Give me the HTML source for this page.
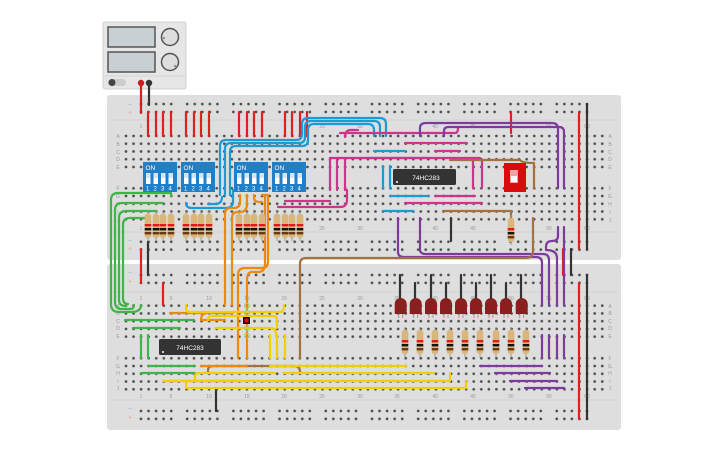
<!DOCTYPE html>
<html><head><meta charset="utf-8"><style>
html,body{margin:0;padding:0;background:#fff;width:725px;height:453px;overflow:hidden}
svg{display:block}
text{font-family:"Liberation Sans",sans-serif}
</style></head><body>
<svg width="725" height="453" viewBox="0 0 725 453" xmlns="http://www.w3.org/2000/svg">
<defs>
<pattern id="h" patternUnits="userSpaceOnUse" width="7.56" height="7.75"><circle cx="3.78" cy="3.875" r="1.35" fill="#4d4d4d"/></pattern>
<pattern id="r" patternUnits="userSpaceOnUse" width="46.2" height="7.9"><circle cx="3.78" cy="3.95" r="1.35" fill="#4d4d4d"/><circle cx="11.34" cy="3.95" r="1.35" fill="#4d4d4d"/><circle cx="18.9" cy="3.95" r="1.35" fill="#4d4d4d"/><circle cx="26.46" cy="3.95" r="1.35" fill="#4d4d4d"/><circle cx="34.02" cy="3.95" r="1.35" fill="#4d4d4d"/></pattern>
<g id="res"><rect x="-3.3" y="0" width="6.6" height="24" rx="2.5" fill="#d9b67c"/><rect x="-3.3" y="10" width="6.6" height="2.4" fill="#e01b1b"/><rect x="-3.3" y="14" width="6.6" height="2.4" fill="#111"/><rect x="-3.3" y="18" width="6.6" height="2.4" fill="#6b3a10"/><line x1="0" y1="-3" x2="0" y2="0" stroke="#999" stroke-width="1"/><line x1="0" y1="24" x2="0" y2="27" stroke="#999" stroke-width="1"/></g>
<g id="dip"><rect x="0" y="0" width="34" height="30" fill="#1f7fc9"/><text x="2.5" y="8" font-size="6.5" fill="#fff">ON</text>
<rect x="3" y="11" width="4.5" height="11" fill="#fff" opacity=".8"/><rect x="3" y="16" width="4.5" height="6" fill="#fff"/>
<rect x="10.5" y="11" width="4.5" height="11" fill="#fff" opacity=".8"/><rect x="10.5" y="16" width="4.5" height="6" fill="#fff"/>
<rect x="18" y="11" width="4.5" height="11" fill="#fff" opacity=".8"/><rect x="18" y="16" width="4.5" height="6" fill="#fff"/>
<rect x="25.5" y="11" width="4.5" height="11" fill="#fff" opacity=".8"/><rect x="25.5" y="16" width="4.5" height="6" fill="#fff"/>
<text x="3" y="28.5" font-size="6" fill="#fff">1</text><text x="10.5" y="28.5" font-size="6" fill="#fff">2</text><text x="18" y="28.5" font-size="6" fill="#fff">3</text><text x="25.5" y="28.5" font-size="6" fill="#fff">4</text></g>
<g id="led"><line x1="-2" y1="14" x2="-2" y2="20" stroke="#999" stroke-width="1"/><line x1="2" y1="14" x2="2" y2="20" stroke="#999" stroke-width="1"/><path d="M-6,16 V6 A6,6 0 0 1 6,6 V16 Z" fill="#8a1f1f"/></g>
</defs>

<rect x="103" y="22" width="83" height="67" rx="2" fill="#e6e6e6" stroke="#d0d0d0"/>
<rect x="108" y="27" width="47" height="20" fill="#c8d0d3" stroke="#555" stroke-width="1.5"/>
<rect x="108" y="52" width="47" height="20" fill="#c8d0d3" stroke="#555" stroke-width="1.5"/>
<circle cx="170" cy="37" r="8.5" fill="#ddd" stroke="#555" stroke-width="1.5"/>
<circle cx="170" cy="62" r="8.5" fill="#ddd" stroke="#555" stroke-width="1.5"/>
<circle cx="164" cy="38" r="0.8" fill="#333"/><circle cx="175" cy="66" r="0.8" fill="#333"/>
<line x1="103" y1="76" x2="186" y2="76" stroke="#d4d4d4"/>
<rect x="108" y="79" width="18" height="7" rx="3.5" fill="#ccc"/><circle cx="112" cy="82.5" r="3.5" fill="#444"/>
<rect x="107" y="95" width="514" height="165" rx="3" fill="#dedede"/>
<rect x="107" y="264" width="514" height="166" rx="3" fill="#dedede"/>
<g stroke="#d2d2d2" stroke-width="1">
<line x1="110" y1="120" x2="618" y2="120"/><line x1="110" y1="232" x2="618" y2="232"/>
<line x1="110" y1="292" x2="618" y2="292"/><line x1="110" y1="400" x2="618" y2="400"/>
</g>
<rect width="484" height="38.75" fill="url(#h)" transform="translate(122.2,132.1)"/>
<rect width="484" height="38.75" fill="url(#h)" transform="translate(122.2,184.4)"/>
<rect width="484" height="38.75" fill="url(#h)" transform="translate(122.2,301.8)"/>
<rect width="484" height="38.75" fill="url(#h)" transform="translate(122.2,354.4)"/>
<rect width="455" height="15.8" fill="url(#r)" transform="translate(137.2,100.1)"/>
<rect width="455" height="15.8" fill="url(#r)" transform="translate(137.2,237.8)"/>
<rect width="455" height="15.8" fill="url(#r)" transform="translate(137.2,271)"/>
<rect width="455" height="15.8" fill="url(#r)" transform="translate(137.2,407)"/>
<g font-size="5" fill="#9a9a9a" text-anchor="middle">
<text x="118" y="138">A</text><text x="118" y="146">B</text><text x="118" y="154">C</text><text x="118" y="161">D</text><text x="118" y="169">E</text>
<text x="118" y="190">F</text><text x="118" y="198">G</text><text x="118" y="206">H</text><text x="118" y="214">I</text><text x="118" y="222">J</text>
<text x="610" y="138">A</text><text x="610" y="146">B</text><text x="610" y="154">C</text><text x="610" y="161">D</text><text x="610" y="169">E</text>
<text x="610" y="190">F</text><text x="610" y="198">G</text><text x="610" y="206">H</text><text x="610" y="214">I</text><text x="610" y="222">J</text>
<text x="118" y="308">A</text><text x="118" y="315">B</text><text x="118" y="323">C</text><text x="118" y="330">D</text><text x="118" y="338">E</text>
<text x="118" y="360">F</text><text x="118" y="368">G</text><text x="118" y="375">H</text><text x="118" y="383">I</text><text x="118" y="390">J</text>
<text x="610" y="308">A</text><text x="610" y="315">B</text><text x="610" y="323">C</text><text x="610" y="330">D</text><text x="610" y="338">E</text>
<text x="610" y="360">F</text><text x="610" y="368">G</text><text x="610" y="375">H</text><text x="610" y="383">I</text><text x="610" y="390">J</text>
<text x="141" y="128">1</text><text x="322" y="128">25</text><text x="360" y="128">30</text><text x="435" y="128">40</text><text x="473" y="128">45</text><text x="549" y="128">55</text><text x="587" y="128">60</text>
<text x="141" y="230">1</text><text x="322" y="230">25</text><text x="360" y="230">30</text><text x="435" y="230">40</text><text x="473" y="230">45</text><text x="549" y="230">55</text><text x="587" y="230">60</text>
<text x="141" y="300">1</text><text x="171" y="300">5</text><text x="209" y="300">10</text><text x="247" y="300">15</text><text x="284" y="300">20</text><text x="322" y="300">25</text><text x="360" y="300">30</text><text x="397" y="300">35</text><text x="435" y="300">40</text><text x="473" y="300">45</text><text x="511" y="300">50</text><text x="549" y="300">55</text><text x="587" y="300">60</text>
<text x="141" y="398">1</text><text x="171" y="398">5</text><text x="209" y="398">10</text><text x="247" y="398">15</text><text x="284" y="398">20</text><text x="322" y="398">25</text><text x="360" y="398">30</text><text x="397" y="398">35</text><text x="435" y="398">40</text><text x="473" y="398">45</text><text x="511" y="398">50</text><text x="549" y="398">55</text><text x="587" y="398">60</text>
</g>
<g font-size="7" fill="#8db8e0"><text x="128" y="107">−</text><text x="128" y="275">−</text><text x="128" y="411">−</text><text x="128" y="243">−</text></g>
<g font-size="7" fill="#f0a0a0"><text x="128" y="115">+</text><text x="128" y="284">+</text><text x="128" y="420">+</text><text x="128" y="251">+</text></g>

<g fill="none" stroke-linecap="round" stroke-linejoin="round" stroke-width="2.2">
<path d="M141,84 V113" stroke="#d42020"/><path d="M149,84 V105" stroke="#333"/>
<g stroke="#e02020">
<path d="M148,112V136M156,112V136M163,112V136M171,112V136"/>
<path d="M186,112V136M194,112V136M201,112V136M209,112V136"/>
<path d="M239,112V136M247,112V136M254,112V136M262,112V136"/>
<path d="M285,112V136M292,112V136M300,112V136M307,112V136"/>
<path d="M511,113V133"/><path d="M579,113V249"/><path d="M563,249V275"/><path d="M579,283V419"/>
<path d="M141,249V283"/><path d="M163,283V305"/>
</g>
<g stroke="#333">
<path d="M587,104V249"/><path d="M571,249V275"/><path d="M587,275V419"/><path d="M148,242V275"/><path d="M216,388V411"/><path d="M451,218V241"/>
<path d="M400,275V300M415,283V300M431,275V300M446,283V300M461,275V300M476,283V300M491,275V300M506,283V300M521,275V300"/>
</g>
<g stroke="#1c9ad6">
<path d="M220,195V146Q220,140 226,140H296Q302,140 302,134V124Q302,118 308,118H380Q386,118 386,124V136"/>
<path d="M225,195V149Q225,143 231,143H299Q305,143 305,137V127Q305,121 311,121H374Q380,121 380,127V136"/>
<path d="M230,195V152Q230,146 236,146H302Q308,146 308,140V130Q308,124 314,124H368Q374,124 374,130V136"/>
<path d="M208,204H215Q222,204 222,197"/>
<path d="M186,203Q186,208 192,208H226Q233,208 233,201V190"/>
<path d="M374,151H405M367,158H428M383,166V188M390,166V188M390,196H428M383,211H413"/>
</g>
<g stroke="#d0338b">
<path d="M340,133H455Q458,133 458,128"/><path d="M405,143H467M435,151H460M330,158H480"/>
<path d="M473,160V188M482,160V188M435,196H475M405,203H482"/>
<path d="M330,158V190M337,158V190M345,158V190"/>
<path d="M278,207H340Q347,207 347,200V190M285,201H330"/>
<path d="M345,137Q345,130 351,130H358"/>
</g>
<g stroke="#7b3c9c">
<path d="M420,136V128Q420,123 426,123H552Q558,123 558,129V188"/>
<path d="M444,136V131Q444,127 449,127H559Q564,127 564,132V188"/>
<path d="M398,218V252Q398,257 404,257H536Q542,257 542,263V305"/>
<path d="M420,218V250Q420,254 426,254H543Q549,254 549,260V305"/>
<path d="M558,227V236Q558,241 552,241Q546,241 546,247V250Q557,250 557,258V305"/>
<path d="M564,227V305"/>
<path d="M542,335V358M549,335V358M557,335V358M564,335V358"/>
<path d="M480,366H542M495,373H550M510,381H557M525,388H564"/>
</g>
<g stroke="#a2713f">
<path d="M450,160H520Q522,163 534,163V188"/>
<path d="M443,211H511V220"/>
<path d="M300,358V264Q300,258 306,258H526Q533,258 533,251V218"/>
<path d="M208,373V370Q208,366 214,366H294Q300,366 300,372"/>
</g>
<g stroke="#3db548">
<path d="M171,196V193H118Q111,193 111,200V304Q111,312 119,312H131Q141,312 141,305"/>
<path d="M163,203H122Q115,203 115,210V302Q115,309 122,309H130Q134,309 134,305"/>
<path d="M156,211H126Q119,211 119,218V300Q119,306 126,306"/>
<path d="M148,218H130Q123,218 123,225V298Q123,304 128,304"/>
<path d="M125,320H194M133,328H180M141,335V358M148,335V358M148,366H195M141,373H195"/>
</g>
<g stroke="#ec8a10">
<path d="M240,195V202Q240,208 234,208H231Q225,208 225,214V305"/>
<path d="M247,195V204Q247,212 240,212H238Q232,212 232,218V305"/>
<path d="M254,195V198Q254,202 260,202H262M262,195H268V262Q268,268 262,268H245Q238,268 238,275V358"/>
<path d="M265,195V264Q265,272 258,272H252Q247,272 247,280V358"/>
<path d="M170,313H232M201,320Q201,313 208,313M201,320H225M201,366H247M170,381H240"/>
</g>
<g stroke="#f2d000">
<path d="M186,305V309Q186,312 190,312H280Q284,312 284,305"/>
<path d="M208,320Q208,316 212,316H274Q277,316 277,320V328"/>
<path d="M215,328H270Q276,328 276,335"/>
<path d="M270,335V358M277,335V358M285,335V358"/>
<path d="M270,366H406M283,373H434M195,381V376Q195,373 200,373H275"/>
<path d="M163,381H450Q450,376 450,373"/><path d="M186,388V384Q186,381 190,381"/>
<path d="M186,388H466Q466,384 466,381"/>
</g>
</g>
<circle cx="141" cy="83" r="3.2" fill="#c62020"/><circle cx="149" cy="83" r="3.2" fill="#333"/>
<use href="#dip" x="143" y="162"/><use href="#dip" x="181" y="162"/><use href="#dip" x="234" y="162"/><use href="#dip" x="272" y="162"/>
<g>
<use href="#res" x="148" y="214"/><use href="#res" x="156" y="214"/><use href="#res" x="163" y="214"/><use href="#res" x="171" y="214"/>
<use href="#res" x="186" y="214"/><use href="#res" x="194" y="214"/><use href="#res" x="201" y="214"/><use href="#res" x="209" y="214"/>
<use href="#res" x="239" y="214"/><use href="#res" x="247" y="214"/><use href="#res" x="254" y="214"/><use href="#res" x="262" y="214"/>
<use href="#res" x="277" y="214"/><use href="#res" x="285" y="214"/><use href="#res" x="292" y="214"/><use href="#res" x="300" y="214"/>
<use href="#res" x="511" y="218"/>
</g>
<g>
<rect x="393" y="169" width="63" height="16" rx="1.5" fill="#333"/>
<text x="426" y="180" font-size="6.5" fill="#fff" text-anchor="middle" font-family="Liberation Mono,monospace">74HC283</text>
<circle cx="397" cy="182" r="1" fill="#fff"/>
<rect x="159" y="339" width="62" height="16" rx="1.5" fill="#333"/>
<text x="190" y="350" font-size="6.5" fill="#fff" text-anchor="middle" font-family="Liberation Mono,monospace">74HC283</text>
<circle cx="163" cy="352" r="1" fill="#fff"/>
</g>
<rect x="504" y="163" width="22" height="29" fill="#d80c0c"/>
<rect x="510" y="170" width="8" height="13" fill="#f3a3a3"/><rect x="511" y="176" width="6" height="6" fill="#fff"/>
<rect x="243" y="317" width="7" height="7" fill="#111"/><rect x="244.5" y="318.5" width="4" height="4" fill="#e00"/>
<g fill="none" stroke="#9bd27a" stroke-width="1"><circle cx="247" cy="305.7" r="2.5"/><circle cx="247" cy="313" r="2.5"/><circle cx="247" cy="328" r="2.5"/><circle cx="247" cy="335.6" r="2.5"/></g>
<use href="#led" x="400.7" y="298"/><use href="#led" x="415.7" y="298"/><use href="#led" x="431" y="298"/><use href="#led" x="446" y="298"/><use href="#led" x="461" y="298"/><use href="#led" x="476" y="298"/><use href="#led" x="491" y="298"/><use href="#led" x="506" y="298"/><use href="#led" x="521.7" y="298"/>
<use href="#res" x="405" y="330"/><use href="#res" x="420" y="330"/><use href="#res" x="435" y="330"/><use href="#res" x="450" y="330"/><use href="#res" x="465" y="330"/><use href="#res" x="480" y="330"/><use href="#res" x="496" y="330"/><use href="#res" x="511" y="330"/><use href="#res" x="526" y="330"/>
</svg>
</body></html>
